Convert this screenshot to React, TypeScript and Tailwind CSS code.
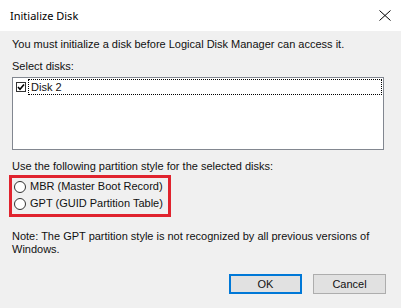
import React from 'react';

const CheckBox = () => (
  <span className="flex h-[10px] w-[10px] shrink-0 items-center justify-center border border-[#333] bg-white">
    <svg width="8" height="8" viewBox="0 0 8 8">
      <path d="M1 4 L3 6.2 L7 1.5" fill="none" stroke="#000" strokeWidth="1.6" />
    </svg>
  </span>
);

const Radio = ({ label }: { label: string }) => (
  <label className="flex h-[17px] items-center">
    <span className="ml-[2px] mr-[4px] h-[12px] w-[12px] shrink-0 rounded-full border border-[#333] bg-white" />
    <span>{label}</span>
  </label>
);

const App = () => {
  return (
    <div
      className="flex h-[308px] w-[401px] flex-col overflow-hidden bg-[#f0f0f0] text-[11px] leading-[13px] text-[#111]"
      style={{ fontFamily: '"Liberation Sans", Arial, sans-serif' }}
    >
      <div className="flex h-[31px] shrink-0 items-center justify-between bg-white pl-[10px] pr-[10px]">
        <span className="text-[11px] text-black" style={{ fontFamily: '"Noto Sans", sans-serif' }}>
          Initialize Disk
        </span>
        <svg width="12" height="11" viewBox="0 0 12 11">
          <path d="M0.5 0.5 L11.5 10.5 M11.5 0.5 L0.5 10.5" stroke="#000" strokeWidth="1" />
        </svg>
      </div>

      <div className="flex flex-col px-[12px]">
        <p className="mt-[7px]">You must initialize a disk before Logical Disk Manager can access it.</p>
        <p className="mt-[9px]">Select disks:</p>

        <div className="mt-[4px] h-[73px] w-[372px] border border-[#828790] bg-white pl-[3px] pr-[1px] pt-[1px]">
          <div className="flex items-center">
            <CheckBox />
            <span className="ml-[2px] flex h-[16px] flex-1 items-center border border-dotted border-black pl-[2px]">
              Disk 2
            </span>
          </div>
        </div>

        <p className="mt-[10px]">Use the following partition style for the selected disks:</p>

        <div className="-ml-[3px] mt-[2px] flex h-[42px] w-[162px] flex-col border-[3px] border-[#e0232e]">
          <Radio label="MBR (Master Boot Record)" />
          <Radio label="GPT (GUID Partition Table)" />
        </div>

        <p className="mt-[13px]">
          Note: The GPT partition style is not recognized by all previous versions of
          <br />
          Windows.
        </p>

        <div className="mr-[3px] mt-[18px] flex justify-end gap-[11px]">
          <button className="h-[20px] w-[73px] border-2 border-[#0078d7] bg-[#e1e1e1]">OK</button>
          <button className="h-[20px] w-[73px] border border-[#adadad] bg-[#e1e1e1]">Cancel</button>
        </div>
      </div>
    </div>
  );
};

export default App;
